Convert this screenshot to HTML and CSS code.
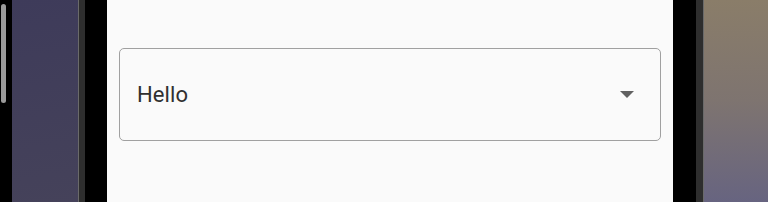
FILE: index.html
```html
<!DOCTYPE html>
<html>
<head>
<meta charset="utf-8">
<link rel="stylesheet" href="styles.css">
</head>
<body>
<div class="stage">
  <div class="gutter"><div class="scrollbar"></div></div>
  <div class="wall-left"></div>
  <div class="frame-edge-left"></div>
  <div class="bezel-left"></div>
  <div class="screen">
    <div class="dropdown">
      <span class="value">Hello</span>
      <svg class="arrow" width="14" height="7" viewBox="0 0 14 7"><path d="M0 0h14L7 7z" fill="#616161"/></svg>
    </div>
  </div>
  <div class="bezel-right"></div>
  <div class="frame-edge-right"></div>
  <div class="wall-right"></div>
</div>
</body>
</html>
```
FILE: styles.css
```css
html, body { margin: 0; padding: 0; }
body { width: 768px; height: 202px; overflow: hidden; background: #000; font-family: Roboto, "Noto Sans", sans-serif; }
.stage { display: flex; height: 202px; }
.gutter { width: 12px; background: #000; padding: 4px 0 0 1px; box-sizing: border-box; }
.scrollbar { width: 5px; height: 99px; background: #9a9a9a; border-radius: 3px; }
.wall-left { width: 66px; background: linear-gradient(170deg, #3e3b5a 0%, #45425a 100%); }
.frame-edge-left { width: 1px; background: #6a6a6a; }
.bezel-left { width: 6px; background: #2e2e2e; border-right: 22px solid #000; }
.screen { width: 566px; background: #fafafa; padding: 48px 12px 0 12px; box-sizing: border-box; }
.dropdown { height: 93px; border: 1px solid #a0a0a0; border-radius: 5px; box-sizing: border-box; display: flex; align-items: center; padding: 0 26px 0 17px; }
.value { flex: 1; font-size: 22px; color: #303030; letter-spacing: 0.1px; }
.arrow { display: block; }
.bezel-right { width: 23px; background: #000; }
.frame-edge-right { width: 7px; background: #2e2e2e; border-right: 1px solid #6a6a6a; }
.wall-right { flex: 1; background: linear-gradient(180deg, #8a7d69 0%, #7e7470 50%, #676480 100%); }
```
